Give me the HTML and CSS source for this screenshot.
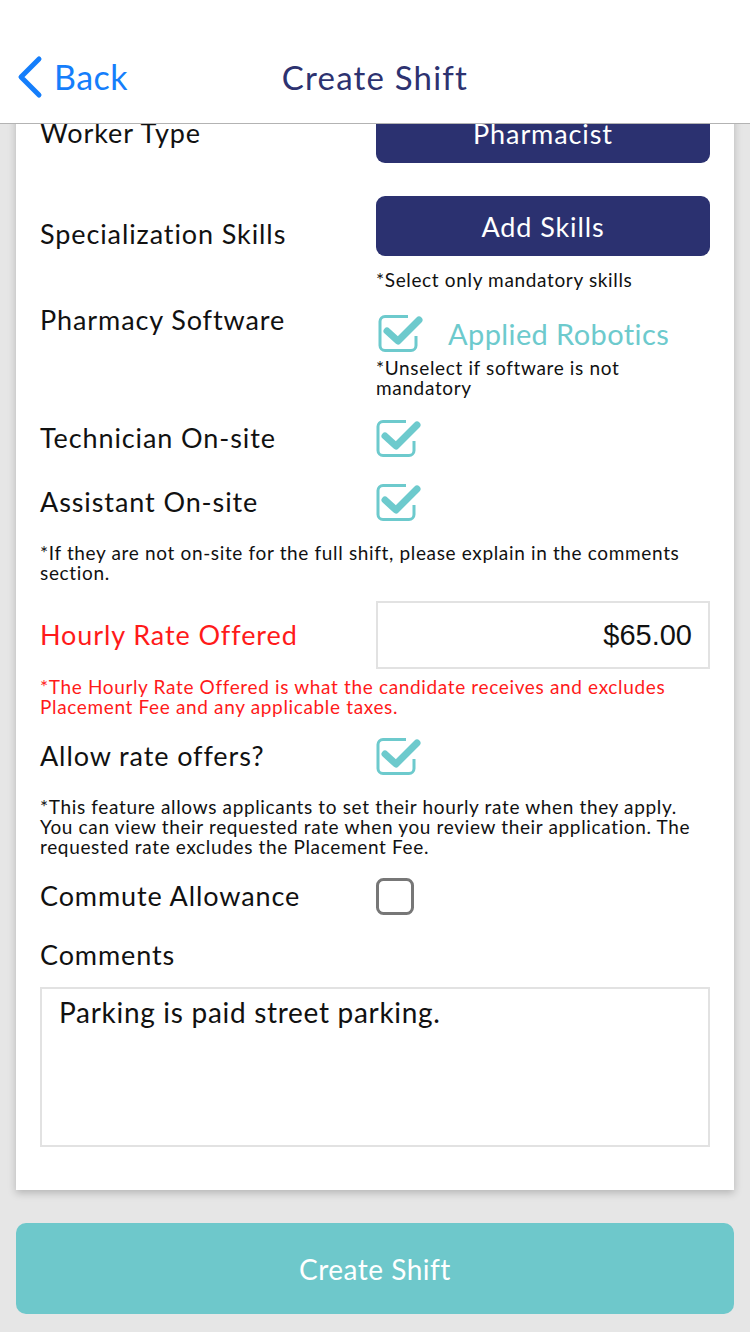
FILE: index.html
```html
<!DOCTYPE html>
<html lang="en">
<head>
<meta charset="utf-8">
<title>Create Shift</title>
<link rel="stylesheet" href="styles.css">
</head>
<body>
<div class="screen">
  <header class="nav">
    <a class="back">
      <svg class="chev" width="28" height="44" viewBox="0 0 28 44"><path d="M23 4 L5 22 L23 40" fill="none" stroke="#157efb" stroke-width="5" stroke-linecap="round" stroke-linejoin="round"/></svg>
      <span>Back</span>
    </a>
    <h1 class="title">Create Shift</h1>
    <div></div>
  </header>

  <main class="viewport">
    <section class="card">
      <div class="row r-worker">
        <div class="label">Worker Type</div>
        <div class="field"><button class="btn-navy">Pharmacist</button></div>
      </div>

      <div class="row r-skills">
        <div class="label label-low">Specialization Skills</div>
        <div class="field"><button class="btn-navy">Add Skills</button>
          <p class="note note-skills">*Select only mandatory skills</p>
        </div>
      </div>

      <div class="row r-software">
        <div class="label">Pharmacy Software</div>
        <div class="field">
          <div class="soft">
            <svg class="cb" width="46" height="42" viewBox="0 0 46 42"><path d="M30 4.5 H7 A5 5 0 0 0 2 9.5 V33.5 A5 5 0 0 0 7 38.5 H33 A5 5 0 0 0 38 33.5 V24" fill="none" stroke="#6dcacd" stroke-width="3"/><path d="M9 19 L20 29 L41 8" fill="none" stroke="#6dcacd" stroke-width="7" stroke-linecap="round" stroke-linejoin="round"/></svg>
            <span class="soft-name">Applied Robotics</span>
          </div>
          <p class="note note-soft">*Unselect if software is not mandatory</p>
        </div>
      </div>

      <div class="row r-tech">
        <div class="label">Technician On-site</div>
        <div class="field">
          <svg class="cb" width="46" height="42" viewBox="0 0 46 42"><path d="M30 4.5 H7 A5 5 0 0 0 2 9.5 V33.5 A5 5 0 0 0 7 38.5 H33 A5 5 0 0 0 38 33.5 V24" fill="none" stroke="#6dcacd" stroke-width="3"/><path d="M9 19 L20 29 L41 8" fill="none" stroke="#6dcacd" stroke-width="7" stroke-linecap="round" stroke-linejoin="round"/></svg>
        </div>
      </div>

      <div class="row r-assist">
        <div class="label">Assistant On-site</div>
        <div class="field">
          <svg class="cb" width="46" height="42" viewBox="0 0 46 42"><path d="M30 4.5 H7 A5 5 0 0 0 2 9.5 V33.5 A5 5 0 0 0 7 38.5 H33 A5 5 0 0 0 38 33.5 V24" fill="none" stroke="#6dcacd" stroke-width="3"/><path d="M9 19 L20 29 L41 8" fill="none" stroke="#6dcacd" stroke-width="7" stroke-linecap="round" stroke-linejoin="round"/></svg>
        </div>
      </div>

      <p class="note note-wide note-onsite">*If they are not on-site for the full shift, please explain in the comments section.</p>

      <div class="row r-rate">
        <div class="label label-red">Hourly Rate Offered</div>
        <div class="field"><div class="rate-input">$65.00</div></div>
      </div>

      <p class="note note-wide note-red">*The Hourly Rate Offered is what the candidate receives and excludes Placement Fee and any applicable taxes.</p>

      <div class="row r-allow">
        <div class="label">Allow rate offers?</div>
        <div class="field">
          <svg class="cb" width="46" height="42" viewBox="0 0 46 42"><path d="M30 4.5 H7 A5 5 0 0 0 2 9.5 V33.5 A5 5 0 0 0 7 38.5 H33 A5 5 0 0 0 38 33.5 V24" fill="none" stroke="#6dcacd" stroke-width="3"/><path d="M9 19 L20 29 L41 8" fill="none" stroke="#6dcacd" stroke-width="7" stroke-linecap="round" stroke-linejoin="round"/></svg>
        </div>
      </div>

      <p class="note note-wide note-allow">*This feature allows applicants to set their hourly rate when they apply. You can view their requested rate when you review their application. The requested rate excludes the Placement Fee.</p>

      <div class="row r-commute">
        <div class="label">Commute Allowance</div>
        <div class="field">
          <svg class="cb" width="46" height="42" viewBox="0 0 46 42"><rect x="1.5" y="4.5" width="35" height="34" rx="6" fill="none" stroke="#777" stroke-width="3"/></svg>
        </div>
      </div>

      <div class="label comments-label">Comments</div>
      <div class="textarea">Parking is paid street parking.</div>
    </section>
  </main>

  <footer class="footer">
    <button class="btn-create">Create Shift</button>
  </footer>
</div>
</body>
</html>
```

FILE: styles.css
```css
* { box-sizing: border-box; }
html, body { margin: 0; padding: 0; }
body {
  background: #e6e6e6;
  font-family: "Lato", "Noto Sans", sans-serif;
  color: #111;
}
.screen { width: 750px; height: 1332px; overflow: hidden; display: flex; flex-direction: column; }

.nav {
  height: 124px;
  flex: none;
  background: #fff;
  border-bottom: 1px solid #b3b3b3;
  display: grid;
  grid-template-columns: 1fr auto 1fr;
  align-items: center;
  padding-top: 30px;
  position: relative;
  z-index: 2;
}
.back {
  display: flex;
  align-items: center;
  gap: 10px;
  padding-left: 16px;
  color: #157efb;
  font-size: 34px;
  letter-spacing: 0.5px;
}
.chev { display: block; }
.title {
  margin: 0;
  font-weight: 400;
  font-size: 33px;
  color: #2d3270;
  letter-spacing: 1.2px;
}

.viewport {
  height: 1083px;
  flex: none;
  overflow: hidden;
  padding: 0 16px;
}
.card {
  background: #fff;
  margin-top: -21px;
  padding: 0 24px 43px;
  box-shadow: 0 3px 8px rgba(0,0,0,0.22);
}

.row {
  display: grid;
  grid-template-columns: 336px 1fr;
  align-items: center;
}
.label {
  font-size: 27px;
  line-height: 30px;
  letter-spacing: 0.9px;
  color: #111;
}
.label-red { color: #ff1a1a; }
.field { min-width: 0; }
.cb { display: block; }

.btn-navy {
  display: block;
  width: 100%;
  height: 60px;
  border: none;
  border-radius: 9px;
  background: #2b3170;
  color: #fff;
  font-family: inherit;
  font-size: 27px;
  letter-spacing: 0.9px;
  padding: 0;
}

.note {
  margin: 0;
  font-size: 19px;
  line-height: 20px;
  letter-spacing: 0.65px;
  color: #111;
}

.r-worker { height: 60px; }
.r-skills { margin-top: 33px; align-items: start; }
.label-low { margin-top: 23px; }
.note-skills { margin-top: 14px; }

.r-software { margin-top: 15px; align-items: start; }
.soft { display: flex; align-items: center; margin-top: 7px; margin-left: 2px; }
.soft-name { margin-left: 24px; font-size: 29px; letter-spacing: 0.4px; color: #6dcacd; }
.note-soft { margin-top: 4px; padding-right: 20px; }

.r-tech { margin-top: 19px; }
.r-assist { margin-top: 22px; }
.note-onsite { margin-top: 20px; }

.r-rate { margin-top: 18px; }
.rate-input {
  height: 68px;
  border: 2px solid #e2e2e2;
  display: flex;
  align-items: center;
  justify-content: flex-end;
  padding-right: 16px;
  font-family: "Liberation Sans", Arial, sans-serif;
  font-size: 29px;
  color: #111;
}
.note-red { margin-top: 8px; color: #ff1a1a; }

.r-allow { margin-top: 18px; }
.note-allow { margin-top: 20px; }
.r-commute { margin-top: 18px; }

.comments-label { margin-top: 23px; }
.textarea {
  margin-top: 17px;
  height: 160px;
  border: 2px solid #e2e2e2;
  padding: 8px 17px;
  font-size: 28px;
  letter-spacing: 0.7px;
  line-height: 30px;
  color: #111;
}

.footer { padding: 16px 16px 0; flex: none; }
.btn-create {
  display: block;
  width: 100%;
  height: 91px;
  border: none;
  border-radius: 10px;
  background: #6ec8cb;
  color: #fff;
  font-family: inherit;
  font-size: 28px;
  letter-spacing: 0.5px;
  padding: 0;
}
```
